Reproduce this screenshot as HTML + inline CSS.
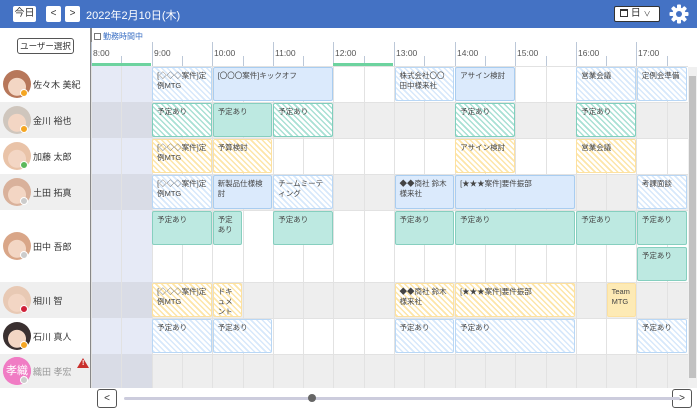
<!DOCTYPE html>
<html><head><meta charset="utf-8">
<style>
*{box-sizing:border-box;margin:0;padding:0}
body{width:697px;height:409px;overflow:hidden;background:#fff;font-family:"Liberation Sans","Noto Sans CJK JP",sans-serif;position:relative}
.a{position:absolute}
.hdr{left:0;top:0;width:697px;height:28px;background:#4472c4}
.btn{background:#fff;border-radius:2px;font-size:10px;color:#333;text-align:center}
.ev{position:absolute;font-size:7.5px;line-height:10px;color:#444;padding:3px 4px;border-radius:2px;overflow:hidden;word-break:break-all}
.bs{background:repeating-linear-gradient(45deg,#d7e8fb 0 1.5px,#fff 1.5px 4px);border:1px solid #b9d7f5}
.bf{background:#dbeafc;border:1px solid #a9cdf0}
.gs{background:repeating-linear-gradient(45deg,#a9e0d4 0 1.5px,#fff 1.5px 4px);border:1px solid #80cfbd}
.gf{background:#bde9e1;border:1px solid #86cfbf}
.ys{background:repeating-linear-gradient(45deg,#fde5a8 0 1.5px,#fff 1.5px 4px);border:1px solid #fde1a0}
.yf{background:#fdeab5;border:1px solid #fde1a0}
.name{font-size:9px;color:#333}
.av{width:28px;height:28px;border-radius:50%}
.badge{width:8px;height:8px;border-radius:50%;border:1px solid #fff}
</style></head><body>
<div class="a hdr"></div>
<div class="a btn" style="left:13px;top:6px;width:23px;height:16px;line-height:16px">今日</div>
<div class="a btn" style="left:46px;top:6px;width:15px;height:16px;line-height:15px">&lt;</div>
<div class="a btn" style="left:65px;top:6px;width:15px;height:16px;line-height:15px">&gt;</div>
<div class="a" style="left:86px;top:7px;color:#fff;font-size:11px">2022年2月10日(木)</div>
<div class="a btn" style="left:614px;top:6px;width:46px;height:16px;border:1px solid #333;line-height:14px;text-align:left;padding-left:5px"><span style="display:inline-block;width:8px;height:8px;border:1px solid #333;border-top-width:2px;vertical-align:-1px"></span> 日 <span style="font-size:7px">∨</span></div>
<svg class="a" style="left:669px;top:4px" width="20" height="20" viewBox="0 0 20 20"><g fill="#fff"><circle cx="10" cy="10" r="6.5"/><g id="t"><rect x="8" y="0.5" width="4" height="4" rx="1"/><rect x="8" y="15.5" width="4" height="4" rx="1"/></g><use href="#t" transform="rotate(45 10 10)"/><use href="#t" transform="rotate(90 10 10)"/><use href="#t" transform="rotate(135 10 10)"/></g><circle cx="10" cy="10" r="3" fill="#4472c4"/></svg>

<div class="a" style="left:17px;top:38px;width:57px;height:16px;border:1px solid #555;border-radius:3px;font-size:8.5px;text-align:center;line-height:14px;color:#333">ユーザー選択</div>
<div class="a" style="left:94px;top:31px;font-size:8px;color:#3a6fc4"><span style="display:inline-block;width:7px;height:7px;border:1px solid #777;vertical-align:-1px;margin-right:2px"></span>勤務時間中</div>
<div class="a" style="left:90px;top:28px;width:2px;height:381px;background:#888"></div>
<div id="g"></div>
<div class="a" style="left:688px;top:67px;width:9px;height:321px;background:#f0f0f0"></div>
<div class="a" style="left:689px;top:76px;width:7px;height:302px;background:#c1c1c1"></div>
<div class="a" style="left:90px;top:388px;width:607px;height:21px;background:#fff"></div>
<div class="a btn" style="left:97px;top:389px;width:20px;height:19px;border:1px solid #555;line-height:17px;border-radius:3px">&lt;</div>
<div class="a btn" style="left:672px;top:389px;width:20px;height:19px;border:1px solid #555;line-height:17px;border-radius:3px">&gt;</div>
<div class="a" style="left:124px;top:397px;width:556px;height:3px;background:#ccd;border-radius:2px"></div>
<div class="a" style="left:308px;top:394px;width:8px;height:8px;border-radius:50%;background:#666"></div>
<script>
var g=document.getElementById('g'),h='';
function X(t){return 91+(t-8)*60.6}
var rows=[[66,36],[102,36],[138,36],[174,36],[210,72],[282,36],[318,36],[354,34]];
rows.forEach(function(r,i){
 var gray=i%2==1;
 h+='<div class="a" style="left:0;top:'+r[0]+'px;width:90px;height:'+r[1]+'px;background:'+(gray?'#efefef':'#fff')+'"></div>';
 h+='<div class="a" style="left:92px;top:'+r[0]+'px;width:596px;height:'+r[1]+'px;background:'+(gray?'#eee':'#fff')+';border-top:1px solid #e2e2e2"></div>';
 h+='<div class="a" style="left:92px;top:'+r[0]+'px;width:60px;height:'+r[1]+'px;background:'+(gray?'#d9dce6':'#e6eaf6')+'"></div>';
});
for(var t=8;t<18;t+=0.5){var x=X(t);
 h+='<div class="a" style="left:'+Math.round(x)+'px;top:'+(t%1?56:42)+'px;width:1px;height:'+(t%1?10:24)+'px;background:#bcc8d8"></div>';
 h+='<div class="a" style="left:'+Math.round(x)+'px;top:66px;width:1px;height:322px;background:#e2e2e2"></div>';
 if(t%1==0)h+='<div class="a" style="left:'+(Math.round(x)+2)+'px;top:48px;font-size:8.5px;color:#555">'+t+':00</div>';
}
h+='<div class="a" style="left:92px;top:63px;width:59px;height:3px;background:#6dd39f"></div>';
h+='<div class="a" style="left:333px;top:63px;width:60px;height:3px;background:#6dd39f"></div>';
var E=[
[0,0,'bs',9,10,'[◇◇◇案件]定例MTG'],[0,0,'bf',10,12,'[〇〇〇案件]キックオフ'],[0,0,'bs',13,14,'株式会社〇〇 田中様来社'],[0,0,'bf',14,15,'アサイン検討'],[0,0,'bs',16,17,'営業会議'],[0,0,'bs',17,18,'定例会準備'],
[1,0,'gs',9,10,'予定あり'],[1,0,'gf',10,11,'予定あり'],[1,0,'gs',11,12,'予定あり'],[1,0,'gs',14,15,'予定あり'],[1,0,'gs',16,17,'予定あり'],
[2,0,'ys',9,10,'[◇◇◇案件]定例MTG'],[2,0,'ys',10,11,'予算検討'],[2,0,'ys',14,15,'アサイン検討'],[2,0,'ys',16,17,'営業会議'],
[3,0,'bs',9,10,'[◇◇◇案件]定例MTG'],[3,0,'bf',10,11,'新製品仕様検討'],[3,0,'bs',11,12,'チームミーティング'],[3,0,'bf',13,14,'◆◆商社 鈴木様来社'],[3,0,'bf',14,16,'[★★★案件]要件振部'],[3,0,'bs',17,18,'考課面談'],
[4,0,'gf',9,10,'予定あり'],[4,0,'gf',10,10.5,'予定あり'],[4,0,'gf',11,12,'予定あり'],[4,0,'gf',13,14,'予定あり'],[4,0,'gf',14,16,'予定あり'],[4,0,'gf',16,17,'予定あり'],[4,0,'gf',17,18,'予定あり'],[4,1,'gf',17,18,'予定あり'],
[5,0,'ys',9,10,'[◇◇◇案件]定例MTG'],[5,0,'ys',10,10.5,'ドキュメントレビュ'],[5,0,'ys',13,14,'◆◆商社 鈴木様来社'],[5,0,'ys',14,16,'[★★★案件]要件振部'],[5,0,'yf',16.5,17,'Team MTG'],
[6,0,'bs',9,10,'予定あり'],[6,0,'bs',10,11,'予定あり'],[6,0,'bs',13,14,'予定あり'],[6,0,'bs',14,16,'予定あり'],[6,0,'bs',17,18,'予定あり']];
E.forEach(function(e){var x1=X(e[3]),x2=Math.min(X(e[4]),688),y=rows[e[0]][0]+1+e[1]*36;
 h+='<div class="ev '+e[2]+'" style="left:'+(x1+0.5)+'px;top:'+y+'px;width:'+(x2-x1-1)+'px;height:34px">'+e[5]+'</div>';});
var U=[['佐々木 美紀','#b7775a','#f5a623'],['金川 裕也','#cfc6bd','#f5a623'],['加藤 太郎','#e9c3a8','#5cb85c'],['土田 拓真','#d9b19b','#ccc'],['田中 吾郎','#d9a688','#ccc'],['相川 智','#e8c9b4','#d0223a'],['石川 真人','#3a3030','#f5a623'],['織田 孝宏','#f07cc4','#ccc']];
U.forEach(function(u,i){var r=rows[i],cy=r[0]+r[1]/2;
 h+='<div class="a av" style="left:3px;top:'+(cy-14)+'px;background:radial-gradient(circle at 50% 60%,#f3d6c4 0 40%,'+u[1]+' 42%)"></div>';
 if(i==7)h+='<div class="a av" style="left:3px;top:'+(cy-14)+'px;background:#f07cc4;color:#fff;font-size:11px;line-height:28px;text-align:center">孝織</div>';
 h+='<div class="a badge" style="left:20px;top:'+(cy+5)+'px;background:'+u[2]+'"></div>';
 h+='<div class="a name" style="left:33px;top:'+(cy-6)+'px;'+(i==7?'color:#999':'')+'">'+u[0]+'</div>';});
h+='<div class="a" style="left:77px;top:358px;width:0;height:0;border-left:6px solid transparent;border-right:6px solid transparent;border-bottom:10px solid #c9302c"></div><div class="a" style="left:82px;top:360px;font-size:7px;color:#fff;font-weight:bold">!</div>';
g.innerHTML=h;
</script>
</body></html>
